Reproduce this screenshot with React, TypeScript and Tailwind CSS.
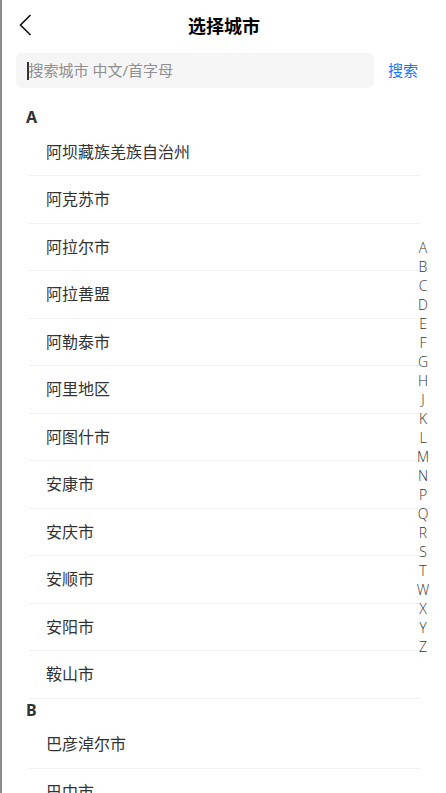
import React from "react";

const groups: { letter: string; cities: string[] }[] = [
  {
    letter: "A",
    cities: [
      "阿坝藏族羌族自治州",
      "阿克苏市",
      "阿拉尔市",
      "阿拉善盟",
      "阿勒泰市",
      "阿里地区",
      "阿图什市",
      "安康市",
      "安庆市",
      "安顺市",
      "安阳市",
      "鞍山市",
    ],
  },
  {
    letter: "B",
    cities: ["巴彦淖尔市", "巴中市", "白城市", "白山市", "白银市", "百色市", "蚌埠市"],
  },
];

const index = "A B C D E F G H J K L M N P Q R S T W X Y Z".split(" ");

export default function App() {
  return (
    <div
      className="relative min-h-[793px] w-full bg-white border-l-2 border-[#8c8c8c] text-[#333]"
      style={{ fontFamily: '"Noto Sans", "Noto Sans CJK SC", sans-serif' }}
    >
      <div className="relative flex h-[52px] items-center justify-center">
        <svg
          className="absolute left-[16px] top-[13px]"
          width="16"
          height="24"
          viewBox="0 0 16 24"
          fill="none"
        >
          <path d="M12.5 2 L2.5 12 L12.5 22" stroke="#111" strokeWidth="1.6" />
        </svg>
        <div className="text-[18px] font-bold text-black">选择城市</div>
      </div>
      <div className="mt-[1px] flex items-center pl-[14px] pr-[28px]">
        <div className="flex h-[35px] flex-1 items-center rounded-[6px] bg-[#f5f5f5] pl-[11px]">
          <span className="h-[18px] w-[1.5px] bg-[#333]"></span>
          <span className="text-[15px] text-[#8f8f8f]">搜索城市 中文/首字母</span>
        </div>
        <div className="ml-[14px] text-[15px] text-[#1677ff]">搜索</div>
      </div>
      <div className="mt-[18px]">
        {groups.map((g) => (
          <div key={g.letter}>
            <div className="flex h-[22.5px] items-center pl-[24px] text-[16px] font-bold text-[#333]">
              {g.letter}
            </div>
            <div className="ml-[27px] mr-[26px]">
              {g.cities.map((c) => (
                <div
                  key={c}
                  className="flex h-[47.5px] items-center border-b border-[#f0f0f0] pl-[17px] text-[16px] text-[#333]"
                >
                  {c}
                </div>
              ))}
            </div>
          </div>
        ))}
      </div>
      <div
        className="absolute right-[14px] top-[238px] flex w-[18px] flex-col items-center text-[14px] leading-[19px] text-[#333]"
        style={{ fontFamily: '"Open Sans", sans-serif', fontWeight: 300 }}
      >
        {index.map((l) => (
          <div key={l}>{l}</div>
        ))}
      </div>
    </div>
  );
}
